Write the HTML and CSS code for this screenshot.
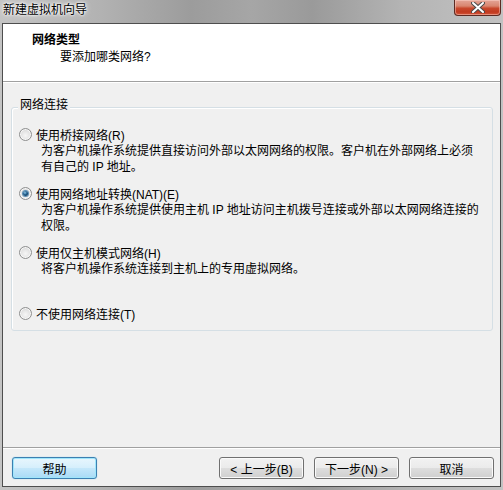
FILE: index.html
```html
<!DOCTYPE html>
<html lang="zh-CN">
<head>
<meta charset="utf-8">
<title>新建虚拟机向导</title>
<link rel="stylesheet" href="styles.css">
</head>
<body>
<div class="window">
  <div class="titlebar">
    <span class="title">新建虚拟机向导</span>
    <span class="close">
      <svg width="14" height="11" viewBox="0 0 14 11">
        <path d="M2 1 L12 10 M12 1 L2 10" stroke="#4a4a4a" stroke-width="4" stroke-linecap="round"/>
        <path d="M2 1 L12 10 M12 1 L2 10" stroke="#ffffff" stroke-width="2" stroke-linecap="round"/>
      </svg>
    </span>
  </div>
  <div class="client">
    <div class="header">
      <div class="h-title">网络类型</div>
      <div class="h-sub">要添加哪类网络?</div>
    </div>
    <div class="sep"></div>
    <div class="body">
      <div class="group">
        <div class="legend">网络连接</div>
        <div class="opt opt-first">
          <div class="opt-row"><span class="radio"></span><span>使用桥接网络(R)</span></div>
          <div class="desc">为客户机操作系统提供直接访问外部以太网网络的权限。客户机在外部网络上必须<br>有自己的 IP 地址。</div>
        </div>
        <div class="opt">
          <div class="opt-row"><span class="radio checked"></span><span>使用网络地址转换(NAT)(E)</span></div>
          <div class="desc">为客户机操作系统提供使用主机 IP 地址访问主机拨号连接或外部以太网网络连接的<br>权限。</div>
        </div>
        <div class="opt">
          <div class="opt-row"><span class="radio"></span><span>使用仅主机模式网络(H)</span></div>
          <div class="desc">将客户机操作系统连接到主机上的专用虚拟网络。</div>
        </div>
        <div class="opt opt-last">
          <div class="opt-row"><span class="radio"></span><span>不使用网络连接(T)</span></div>
        </div>
      </div>
    </div>
    <div class="sep"></div>
    <div class="footer">
      <button class="btn btn-default">帮助</button>
      <div class="spacer"></div>
      <button class="btn">&lt; 上一步(B)</button>
      <button class="btn">下一步(N) &gt;</button>
      <button class="btn">取消</button>
    </div>
  </div>
</div>
</body>
</html>
```
FILE: styles.css
```css
* { box-sizing: border-box; }
html, body { margin: 0; padding: 0; }
body {
  width: 503px;
  height: 490px;
  overflow: hidden;
  font-family: "Liberation Sans", "Noto Sans CJK SC", sans-serif;
  font-size: 12px;
  color: #000;
}
.window {
  width: 503px;
  height: 490px;
  display: flex;
  flex-direction: column;
  background: linear-gradient(90deg, #c4c4c4 0%, #b2b2b2 20%, #9c9c9c 38%, #a6a6a6 50%, #9a9a9a 62%, #b4b4b4 80%, #c2c2c2 100%);
  padding: 0 2px 3px 2px;
}
.titlebar {
  height: 23px;
  display: flex;
  align-items: flex-start;
  justify-content: space-between;
  flex: none;
}
.title {
  margin-left: 1px;
  margin-top: 2px;
  line-height: 16px;
  font-size: 12px;
  text-shadow: 0 0 6px #fff, 0 0 3px #fff, 0 0 2px #fff;
}
.close {
  width: 47px;
  height: 16px;
  border: 1px solid #5c2a22;
  border-top: none;
  border-radius: 0 0 4px 4px;
  background: linear-gradient(180deg, #e4a597 0%, #d98670 40%, #c8482c 55%, #c13a20 80%, #d4583c 100%);
  box-shadow: inset 0 0 0 1px rgba(255,220,210,0.45);
  display: flex;
  align-items: center;
  justify-content: center;
}
.close svg { display: block; }
.client {
  flex: 1;
  border: 1px solid #4e4e4e;
  background: #f0f0f0;
  display: flex;
  flex-direction: column;
}
.header {
  background: #fff;
  height: 57px;
  flex: none;
  padding-top: 8px;
}
.h-title {
  font-weight: bold;
  line-height: 16px;
  padding-left: 29px;
}
.h-sub {
  line-height: 16px;
  margin-top: 1px;
  padding-left: 57px;
}
.sep {
  flex: none;
  height: 2px;
  border-top: 1px solid #a0a0a0;
  border-bottom: 1px solid #ffffff;
}
.body {
  flex: 1;
  padding: 24px 7px 0 8px;
}
.group {
  padding: 0 0 9px 7px;
  border: 1px solid #d5dfe5;
  border-radius: 3px;
  box-shadow: inset 1px 1px 0 #fff;
}
.legend {
  width: fit-content;
  margin: -11px 0 0 -1px;
  padding: 0 2px;
  line-height: 16px;
  background: #f0f0f0;
}
.opt { margin-top: 10px; }
.opt-first { margin-top: 13px; }
.opt-last { margin-top: 28px; }
.opt-row {
  display: flex;
  align-items: center;
  height: 16px;
  gap: 4px;
}
.radio {
  width: 13px;
  height: 13px;
  flex: none;
  border-radius: 50%;
  border: 1px solid #8e8f8f;
  background: radial-gradient(circle at 50% 60%, #f6f6f6 0%, #e6e6e6 45%, #c9c9c9 100%);
  box-shadow: inset 0 0 0 1px #f8f8f8;
  display: flex;
  align-items: center;
  justify-content: center;
}
.radio.checked::after {
  content: "";
  width: 5px;
  height: 5px;
  border-radius: 50%;
  background: radial-gradient(circle at 40% 35%, #8cc6e8 0%, #1d5a88 45%, #0c2a46 100%);
  box-shadow: 0 0 0 1px #5b8fb5;
}
.desc {
  margin-top: 1px;
  padding-left: 22px;
  line-height: 16px;
}
.footer {
  flex: none;
  height: 37px;
  display: flex;
  align-items: flex-start;
  padding: 8px 6px 0 9px;
  gap: 10px;
}
.spacer { flex: 1; }
.btn {
  width: 85px;
  height: 22px;
  margin: 0;
  padding: 0;
  font-family: "Liberation Sans", "Noto Sans CJK SC", sans-serif;
  font-size: 12px;
  color: #000;
  border: 1px solid #707070;
  border-radius: 3px;
  background: linear-gradient(180deg, #f2f2f2 0%, #ebebeb 48%, #dddddd 52%, #cfcfcf 100%);
  box-shadow: inset 0 0 0 1px #fafafa;
}
.btn-default {
  border-color: #3c7fb1;
  background: linear-gradient(180deg, #e8f6fd 0%, #d6effc 48%, #c4e7fa 52%, #a9dbf6 100%);
  box-shadow: inset 0 0 0 1px #9fe6fb, 0 0 1px #5fc6ee;
}
```
